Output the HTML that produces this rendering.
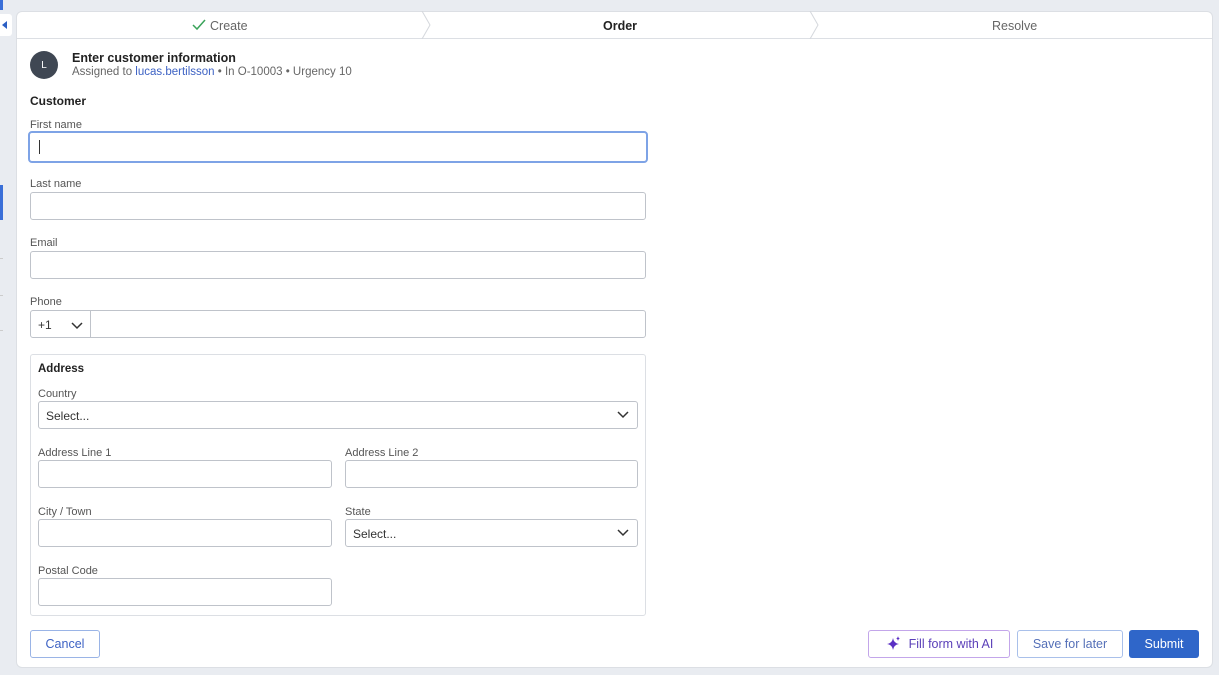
<!DOCTYPE html><html><head><style>
*{box-sizing:border-box;margin:0;padding:0}
body{width:1219px;height:675px;background:#e9ecf1;font-family:"Liberation Sans",sans-serif;position:relative;overflow:hidden;color:#222}
.a{position:absolute}
.card{left:16px;top:11px;width:1197px;height:657px;background:#fff;border-radius:6px;border:1px solid #dcdfe4}
.lbl{position:absolute;font-size:11px;color:#555}
.in{position:absolute;height:28px;border:1px solid #bfc3ca;border-radius:3px;background:#fff}
.sel{font-size:12px;color:#333;padding:7px 7px}
.chev{position:absolute;right:8px;top:9px}
.btn{position:absolute;height:28px;border-radius:3px;font-size:12.5px;display:flex;align-items:center;justify-content:center}
</style></head><body>
<div class="a" style="left:0;top:0;width:3px;height:10px;background:#3a6fd8"></div>
<div class="a" style="left:0;top:185px;width:3px;height:35px;background:#3a6fd8"></div>
<div class="a" style="left:0;top:14px;width:12px;height:22px;background:#fff;border-radius:0 3px 3px 0"></div>
<div class="a" style="left:2px;top:21px;width:0;height:0;border-top:4px solid transparent;border-bottom:4px solid transparent;border-right:5px solid #2b5fc4"></div>
<div class="a" style="left:0;top:258px;width:3px;height:1px;background:#ccc"></div>
<div class="a" style="left:0;top:295px;width:3px;height:1px;background:#ccc"></div>
<div class="a" style="left:0;top:330px;width:3px;height:1px;background:#ccc"></div>
<div class="a card"></div>
<div class="a" style="left:16px;top:38px;width:1197px;height:1px;background:#dcdfe4"></div>
<svg class="a" style="left:420px;top:11px" width="12" height="28"><path d="M2 0 L10 14 L2 28" fill="none" stroke="#d5d8dd"/></svg>
<svg class="a" style="left:808px;top:11px" width="12" height="28"><path d="M2 0 L10 14 L2 28" fill="none" stroke="#d5d8dd"/></svg>
<svg class="a" style="left:192px;top:19px" width="14" height="12"><path d="M1 6 L5 10 L13 1" fill="none" stroke="#3aa35a" stroke-width="1.5"/></svg>
<div class="a" style="left:210px;top:19px;font-size:12.5px;color:#666">Create</div>
<div class="a" style="left:603px;top:19px;font-size:12.5px;font-weight:bold;color:#222">Order</div>
<div class="a" style="left:992px;top:19px;font-size:12.5px;color:#666">Resolve</div>
<div class="a" style="left:30px;top:51px;width:28px;height:28px;border-radius:50%;background:#3f4753;color:#fff;font-size:10px;display:flex;align-items:center;justify-content:center">L</div>
<div class="a" style="left:72px;top:51px;font-size:12.5px;font-weight:bold;color:#222">Enter customer information</div>
<div class="a" style="left:72px;top:66px;font-size:11.5px;color:#666">Assigned to <span style="color:#3d62c4">lucas.bertilsson</span> • In O-10003 • Urgency 10</div>
<div class="a" style="left:30px;top:94px;font-size:12px;font-weight:bold">Customer</div>
<div class="lbl" style="left:30px;top:119px">First name</div>
<div class="in" style="left:28px;top:131px;width:620px;height:32px;border:2px solid #7ea3e6;border-radius:4px"><div class="a" style="left:9px;top:7px;width:1px;height:14px;background:#333"></div></div>
<div class="lbl" style="left:30px;top:178px">Last name</div>
<div class="in" style="left:30px;top:192px;width:616px"></div>
<div class="lbl" style="left:30px;top:237px">Email</div>
<div class="in" style="left:30px;top:251px;width:616px"></div>
<div class="lbl" style="left:30px;top:296px">Phone</div>
<div class="in" style="left:30px;top:310px;width:616px"><div class="a" style="left:59px;top:0;width:1px;height:26px;background:#bfc3ca"></div><div class="a sel" style="left:0;top:0">+1</div><svg class="a" style="left:40px;top:11px" width="12" height="8"><path d="M1 1 L6 6 L11 1" fill="none" stroke="#333" stroke-width="1.5"/></svg></div>
<div class="a" style="left:30px;top:354px;width:616px;height:262px;border:1px solid #dcdfe4;border-radius:3px"></div>
<div class="a" style="left:38px;top:363px;font-size:11.5px;font-weight:bold">Address</div>
<div class="lbl" style="left:38px;top:388px">Country</div>
<div class="in" style="left:38px;top:401px;width:600px"><div class="sel">Select...</div><svg class="chev" width="12" height="8"><path d="M1 1 L6 6 L11 1" fill="none" stroke="#333" stroke-width="1.5"/></svg></div>
<div class="lbl" style="left:38px;top:447px">Address Line 1</div>
<div class="in" style="left:38px;top:460px;width:294px"></div>
<div class="lbl" style="left:345px;top:447px">Address Line 2</div>
<div class="in" style="left:345px;top:460px;width:293px"></div>
<div class="lbl" style="left:38px;top:506px">City / Town</div>
<div class="in" style="left:38px;top:519px;width:294px"></div>
<div class="lbl" style="left:345px;top:506px">State</div>
<div class="in" style="left:345px;top:519px;width:293px"><div class="sel">Select...</div><svg class="chev" width="12" height="8"><path d="M1 1 L6 6 L11 1" fill="none" stroke="#333" stroke-width="1.5"/></svg></div>
<div class="lbl" style="left:38px;top:565px">Postal Code</div>
<div class="in" style="left:38px;top:578px;width:294px"></div>
<div class="btn" style="left:30px;top:630px;width:70px;border:1px solid #9ab4e6;color:#3d62c4">Cancel</div>
<div class="btn" style="left:868px;top:630px;width:142px;border:1px solid #c3a6ea;color:#5a3fb8"><svg width="16" height="16" style="margin-right:8px"><path d="M8 2 Q8.8 7.2 14 8 Q8.8 8.8 8 14 Q7.2 8.8 2 8 Q7.2 7.2 8 2Z" fill="#5a2fc4"/><path d="M13 0 Q13.3 2.2 15 2.5 Q13.3 2.8 13 5 Q12.7 2.8 11 2.5 Q12.7 2.2 13 0Z" fill="#5a2fc4"/></svg>Fill form with AI</div>
<div class="btn" style="left:1017px;top:630px;width:106px;border:1px solid #a9c0ea;color:#5570b8">Save for later</div>
<div class="btn" style="left:1129px;top:630px;width:70px;background:#2f66c9;color:#fff">Submit</div>
</body></html>
